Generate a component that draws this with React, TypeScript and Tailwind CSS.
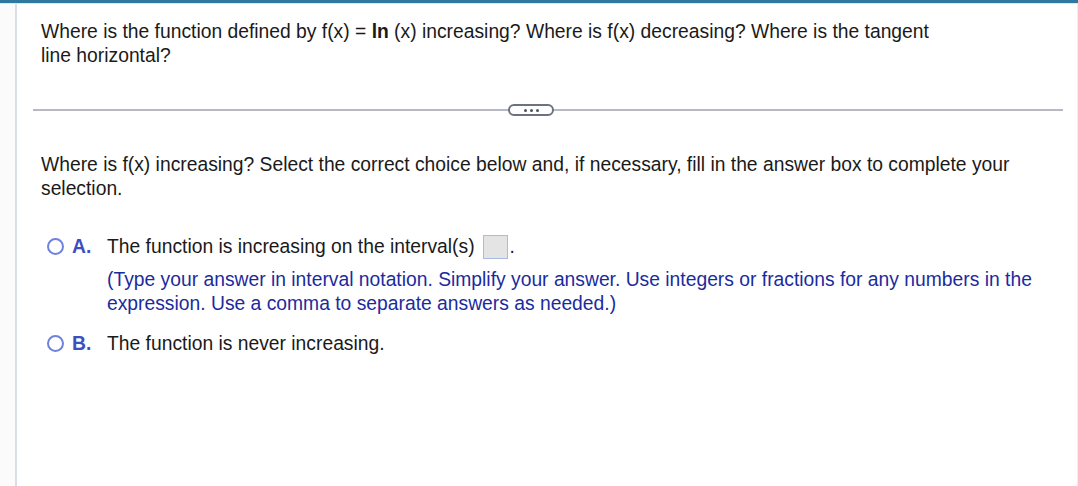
export default function App() {
  return (
    <div
      className="w-[1078px] h-[486px] bg-white overflow-hidden flex flex-col text-[19.3px] leading-[24px] text-[#1a1a1a]"
      style={{ fontFamily: '"Liberation Sans", Arial, sans-serif' }}
    >
      <div className="h-[3px] bg-[#2f78a0] shrink-0"></div>
      <div className="h-px bg-[#f3dede] shrink-0"></div>
      <div className="flex flex-1">
        {/*Left strip*/}
        <div className="w-[17px] bg-[#fbfbfc] border-r-2 border-[#dadee9] shrink-0"></div>

        <div className="flex-1 flex flex-col border-r border-[#eeeeee]">
          {/*Question*/}
          <p className="pl-[24px] pt-[16px] w-[940px]">
            Where is the function defined by f(x) = <b className="font-bold">ln</b> (x) increasing? Where is f(x)
            decreasing? Where is the tangent line horizontal?
          </p>

          {/*Divider*/}
          <div className="relative mt-[41px] ml-[16px] w-[1030px] h-[2px] bg-[#b6b9c3]">
            <div className="absolute left-[475px] -top-[5px] w-[46px] h-[12px] rounded-full border-2 border-[#6b7280] bg-white flex items-center justify-center gap-[3px]">
              <span className="w-[3px] h-[3px] rounded-full bg-[#4b5563]"></span>
              <span className="w-[3px] h-[3px] rounded-full bg-[#4b5563]"></span>
              <span className="w-[3px] h-[3px] rounded-full bg-[#4b5563]"></span>
            </div>
          </div>

          <p className="pl-[24px] mt-[42px] w-[1024px]">
            Where is f(x) increasing? Select the correct choice below and, if necessary, fill in the answer box to
            complete your selection.
          </p>

          {/*Option A*/}
          <div className="flex mt-[34px] pl-[30px]">
            <span className="w-[17px] h-[17px] mt-[3px] rounded-full border-2 border-[#6f82dc] shrink-0"></span>
            <span className="ml-[8px] w-[35px] font-bold text-[#3b4fc0]">A.</span>
            <div className="flex flex-col">
              <div className="flex items-center">
                <span>The function is increasing on the interval(s)</span>
                <span className="ml-[8px] w-[25px] h-[24px] bg-[#e4e4e4] border border-[#aab9ea]"></span>
                <span className="ml-[2px]">.</span>
              </div>
              <p className="mt-[9px] w-[945px] text-[#1b2b9e]">
                (Type your answer in interval notation. Simplify your answer. Use integers or fractions for any
                numbers in the expression. Use a comma to separate answers as needed.)
              </p>
            </div>
          </div>

          {/*Option B*/}
          <div className="flex mt-[16px] pl-[30px]">
            <span className="w-[17px] h-[17px] mt-[3px] rounded-full border-2 border-[#6f82dc] shrink-0"></span>
            <span className="ml-[8px] w-[35px] font-bold text-[#3b4fc0]">B.</span>
            <span>The function is never increasing.</span>
          </div>
        </div>
      </div>
    </div>
  );
}
